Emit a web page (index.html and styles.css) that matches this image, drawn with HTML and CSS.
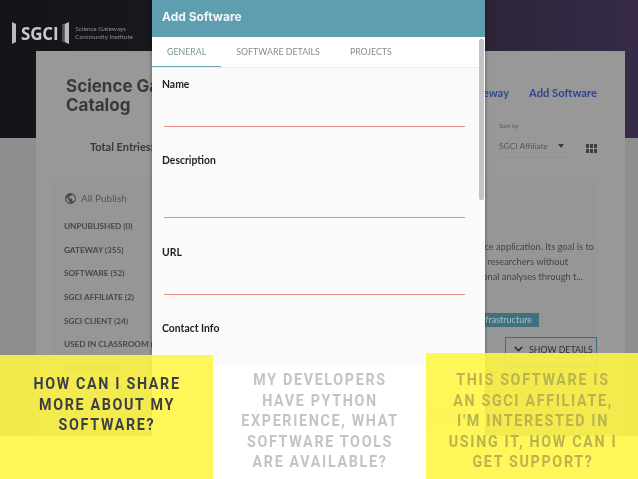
FILE: index.html
```html
<!doctype html>
<html>
  <head>
    <meta charset="utf-8">
    <title>Add Software</title>
    <link rel="stylesheet" href="styles.css">
  </head>
  <body>
    <div class="page">
      <div class="logo">
        <svg class="logo-mark" width="7" height="24" viewBox="0 0 7 24"><polygon points="1,1 5,3 5,21 1,23" fill="#b9b9b9"/></svg>
        <span class="logo-name">SGCI</span>
        <svg class="logo-mark" width="8" height="24" viewBox="0 0 8 24"><path d="M1 3 L1 21" stroke="#8a8a8a" stroke-width="1"/><polygon points="2.5,3 7,1 7,23 2.5,21" fill="#b9b9b9"/></svg>
        <span class="logo-text">Science Gateways<br>Community Institute</span>
      </div>

      <div class="card">
        <div class="card-top">
          <h1>Science Gateways<br>Catalog</h1>
          <div class="actions">
            <a>Add Gateway</a>
            <a>Add Software</a>
          </div>
        </div>

        <div class="filters">
          <div class="total">Total Entries: 431</div>
          <div class="sort">
            <div class="sort-label">Sort by</div>
            <div class="sort-value">SGCI Affiliate <span class="caret"></span></div>
          </div>
          <svg class="grid-icon" width="11" height="9" viewBox="0 0 11 9" fill="#3f3f3f">
            <rect width="3" height="4"/><rect x="4" width="3" height="4"/><rect x="8" width="3" height="4"/>
            <rect y="5" width="3" height="4"/><rect x="4" y="5" width="3" height="4"/><rect x="8" y="5" width="3" height="4"/>
          </svg>
        </div>

        <div class="content">
          <div class="sidebar">
            <div class="publish">
              <svg width="13" height="13" viewBox="0 0 24 24"><path fill="#4a4a4a" d="M12 2a10 10 0 1 0 0 20 10 10 0 0 0 0-20zm-1 17.9A8 8 0 0 1 4.2 10.2L9 15v1c0 1.1.9 2 2 2v1.9zm6.9-2.5A2 2 0 0 0 16 16h-1v-3a1 1 0 0 0-1-1H8v-2h2a1 1 0 0 0 1-1V7h2a2 2 0 0 0 2-2v-.4a8 8 0 0 1 2.9 12.8z"/></svg>
              All Publish
            </div>
            <ul class="types">
              <li>UNPUBLISHED (0)</li>
              <li>GATEWAY (355)</li>
              <li>SOFTWARE (52)</li>
              <li>SGCI AFFILIATE (2)</li>
              <li>SGCI CLIENT (24)</li>
              <li>USED IN CLASSROOM (7)</li>
              <li>PHYSICAL (17)</li>
            </ul>
          </div>
          <div class="result">
            <p class="desc">
              <span>open source application. Its goal is to</span>
              <span class="l2">enables researchers without</span>
              <span class="l3">computational analyses through t...</span>
            </p>
            <div class="tag">Infrastructure</div>
            <div class="show-details">
              <svg width="9" height="6" viewBox="0 0 11 7"><path d="M1 1 L5.5 5.5 L10 1" fill="none" stroke="#2c2c2c" stroke-width="2"/></svg>
              SHOW DETAILS
            </div>
          </div>
        </div>
      </div>

      <div class="modal">
        <div class="modal-head">Add Software</div>
        <div class="tabs">
          <div class="tab active">GENERAL</div>
          <div class="tab">SOFTWARE DETAILS</div>
          <div class="tab">PROJECTS</div>
        </div>
        <div class="modal-body">
          <div class="field"><label>Name</label><div class="input"></div></div>
          <div class="field"><label>Description</label><div class="input tall"></div></div>
          <div class="field"><label>URL</label><div class="input"></div></div>
          <div class="field"><label>Contact Info</label></div>
          <div class="scrollbar"></div>
        </div>
        <div class="modal-foot">
          <span class="btn">SAVE</span>
          <span class="btn">CANCEL</span>
        </div>
      </div>
    </div>

    <div class="captions">
      <div class="caption first"><div class="squeeze">How can I share<br>more about my<br>software?</div></div>
      <div class="caption second"><div class="squeeze">My developers<br>have Python<br>experience, what<br>software tools<br>are available?</div></div>
      <div class="caption third"><div class="squeeze">This software is<br>an SGCI affiliate,<br>I'm interested in<br>using it, how can I<br>get support?</div></div>
    </div>
  </body>
</html>
```

FILE: styles.css
```css
* {
  box-sizing: border-box;
}

html,
body {
  margin: 0;
  padding: 0;
  width: 100%;
  height: 100%;
  overflow: hidden;
  background: #fff;
}
body {
  font-family: Lato, "Open Sans", sans-serif;
  position: relative;
}

.page {
  position: relative;
  height: 436px;
  overflow: hidden;
  padding-top: 21px;
  background: linear-gradient(to right, #141318, #1d1a22 40%, #372b48) 0 0 / 100% 138px no-repeat, #8e8e8e;
  filter: blur(0.4px);
}

.logo {
  display: flex;
  align-items: center;
  height: 24px;
  margin-left: 11px;
}
.logo-name {
  font-family: "Open Sans", sans-serif;
  font-weight: 700;
  font-size: 17px;
  letter-spacing: -0.2px;
  color: #c9c9c9;
  margin: 0 4px 0 3px;
}
.logo-text {
  font-size: 6.4px;
  line-height: 8px;
  color: #8f8f8f;
  margin-left: 5px;
}

.card {
  margin: 6px 13px 0 36px;
  height: 385px;
  padding: 26px 28px 0 17px;
  background: #989898;
}
.card-top {
  display: flex;
  justify-content: space-between;
  padding-left: 13px;
}
h1 {
  margin: 0;
  font-family: Inter, sans-serif;
  font-size: 17px;
  line-height: 19px;
  font-weight: 700;
  color: #37393b;
}
.actions {
  display: flex;
  gap: 20px;
  padding-top: 8px;
  font-size: 11.2px;
  line-height: 15px;
  font-weight: 700;
  color: #2f4594;
}

.filters {
  height: 48px;
  margin-top: 9px;
  display: flex;
  align-items: flex-start;
}
.total {
  margin: 15px 0 0 37px;
  font-size: 11px;
  line-height: 15px;
  font-weight: 700;
  color: #37393b;
}
.sort {
  margin-left: auto;
  margin-right: 16px;
  width: 71px;
}
.sort-label {
  font-size: 6.2px;
  line-height: 10px;
  margin-top: -3px;
  color: #5c5c5c;
}
.sort-value {
  margin-top: 9px;
  font-size: 8.4px;
  line-height: 12px;
  color: #565656;
  display: flex;
  justify-content: space-between;
  align-items: center;
  border-bottom: 1px solid #929292;
  padding-bottom: 5px;
}
.caret {
  width: 0;
  height: 0;
  border-left: 3.5px solid transparent;
  border-right: 3.5px solid transparent;
  border-top: 4px solid #3d3d3d;
  margin-right: 6px;
}
.grid-icon {
  margin-top: 20px;
}

.content {
  display: flex;
  margin-top: 6px;
  height: 300px;
  background: #969696;
}
.sidebar {
  width: 115px;
  flex: none;
  padding: 14px 0 0 11px;
}
.publish {
  display: flex;
  align-items: center;
  gap: 4px;
  font-size: 10px;
  line-height: 13px;
  color: #555;
}
.types {
  list-style: none;
  margin: 15px 0 0;
  padding: 0;
  font-size: 8.2px;
  line-height: 12px;
  font-weight: 700;
  color: #474747;
  white-space: nowrap;
}
.types li {
  margin-bottom: 11.7px;
}

.result {
  flex: 1;
  padding-top: 61px;
}
.desc {
  margin: 0 3px 0 0;
  font-size: 9.3px;
  line-height: 15px;
  color: #454545;
  text-align: right;
  white-space: nowrap;
}
.desc span {
  display: block;
}
.desc .l2 {
  padding-right: 26px;
}
.desc .l3 {
  padding-right: 11px;
}
.tag {
  width: 78px;
  height: 14px;
  margin: 29px 58px 0 auto;
  padding-right: 7px;
  background: #41707f;
  color: #a9c3cb;
  font-size: 9px;
  line-height: 14px;
  text-align: right;
  white-space: nowrap;
}
.show-details {
  display: flex;
  align-items: center;
  gap: 6px;
  width: 92px;
  height: 30px;
  margin: 10px 0 0 auto;
  padding: 0 0 6px 8px;
  border: 1px solid #3d6c7c;
  font-size: 8.8px;
  color: #2f2f2f;
  white-space: nowrap;
}

.modal {
  position: absolute;
  top: 0;
  left: 152px;
  width: 333px;
  height: 436px;
  display: flex;
  flex-direction: column;
  background: #fff;
  box-shadow: 0 0 4px rgba(0, 0, 0, 0.45);
}
.modal-head {
  flex: none;
  height: 37px;
  padding-left: 10px;
  background: #5f9eaf;
  color: #f2f6f7;
  font-family: Inter, sans-serif;
  font-size: 12px;
  font-weight: 700;
  line-height: 33px;
}
.tabs {
  flex: none;
  display: flex;
  height: 31px;
  border-bottom: 1px solid #eee;
  font-size: 8.8px;
  line-height: 29px;
  color: #8b8b8b;
}
.tab {
  padding: 0 15px;
  white-space: nowrap;
}
.tab.active {
  color: #7f9499;
  height: 30px;
  border-bottom: 1px solid #6ba3b3;
}
.modal-body {
  position: relative;
  flex: 1;
  padding: 9px 20px 0 10px;
  background: #fafafa;
}
.field label {
  display: block;
  font-size: 10.4px;
  line-height: 14px;
  font-weight: 700;
  color: #1f1f1f;
}
.input {
  height: 36px;
  margin: 0 0 26px 2px;
  border-bottom: 1px solid #e08f80;
}
.input.tall {
  height: 51px;
  margin-bottom: 27px;
}
.scrollbar {
  position: absolute;
  top: -29px;
  right: 1px;
  width: 5px;
  height: 161px;
  border-radius: 2px;
  background: #c4c4c4;
}
.modal-foot {
  flex: none;
  height: 71px;
  display: flex;
  justify-content: flex-end;
  align-items: flex-start;
  gap: 12px;
  padding: 40px 19px 0 0;
  font-size: 8.5px;
  line-height: 10px;
  color: #d2d2d2;
}
.btn {
  padding: 5px 11px;
  background: #f6f6f6;
}

.captions {
  position: absolute;
  left: 0;
  right: 0;
  bottom: 0;
  display: flex;
  align-items: flex-end;
}
.caption {
  width: 213px;
  flex: none;
  font-family: Roboto, sans-serif;
  font-weight: 700;
  font-size: 17px;
  line-height: 20.6px;
  letter-spacing: 2px;
  text-align: center;
  text-transform: uppercase;
}
.squeeze {
  width: 260px;
  margin-left: -23.5px;
  white-space: nowrap;
  transform: scaleX(0.84);
}
.first {
  height: 124px;
  padding-top: 18px;
  background: rgba(255, 245, 68, 0.885);
  color: #3c3f44;
}
.second {
  height: 114px;
  padding-top: 4px;
  background: rgba(255, 255, 255, 0.92);
  color: #c3c4c8;
}
.third {
  width: 212px;
  height: 126px;
  padding-top: 16px;
  background: rgba(255, 245, 68, 0.885);
  color: #bab44e;
}
```
